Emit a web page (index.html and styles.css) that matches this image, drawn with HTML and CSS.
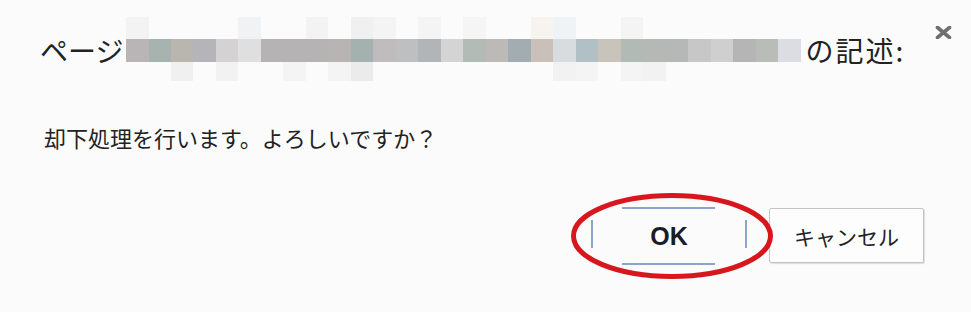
FILE: index.html
```html
<!DOCTYPE html>
<html lang="ja">
<head>
<meta charset="utf-8">
<title>ダイアログ</title>
<link rel="stylesheet" href="styles.css">
</head>
<body>
<div class="dialog">
  <div class="title-row">
    <div class="title">
      <span class="title-text">ページ</span>
      <div class="mosaic" aria-hidden="true">
        <div class="band band-up"></div>
        <div class="band band-main"></div>
        <div class="band band-down"></div>
      </div>
      <span class="title-text title-tail">の記述:</span>
    </div>
    <button class="close" aria-label="閉じる">
      <svg width="17" height="13" viewBox="0 0 17 13"><path d="M2.5 1.5 L14.5 11.5 M14.5 1.5 L2.5 11.5" stroke="#707070" stroke-width="3.6" stroke-linecap="round"/></svg>
    </button>
  </div>
  <p class="message">却下処理を行います。よろしいですか？</p>
  <div class="buttons">
    <button class="btn-ok">OK
      <svg class="mark" width="202" height="86" viewBox="0 0 202 86"><ellipse cx="101" cy="43" rx="98.5" ry="40.5" fill="none" stroke="#d7161e" stroke-width="5"/></svg>
    </button>
    <button class="btn-cancel">キャンセル</button>
  </div>
</div>
</body>
</html>
```
FILE: styles.css
```css
html, body {
  margin: 0;
  padding: 0;
  background: #fbfbfb;
}
body {
  width: 971px;
  height: 312px;
  overflow: hidden;
  font-family: "Noto Sans CJK JP", "Noto Sans", sans-serif;
  color: #222;
}
.dialog {
  box-sizing: border-box;
  height: 312px;
  padding: 17px 19px 0 40px;
}
.title-row {
  display: flex;
  align-items: flex-start;
}
.title {
  display: flex;
  align-items: flex-start;
  font-size: 28px;
  line-height: 28px;
}
.title-text {
  margin-top: 19px;
  white-space: nowrap;
}
.title-tail {
  letter-spacing: 2px;
}
.mosaic {
  width: 675px;
  margin: 0 4px 0 3px;
  display: flex;
  flex-direction: column;
}
.band-up {
  height: 22px;
  background: linear-gradient(to right,
    #f3f3f3 0 22.5px, transparent 22.5px 112.5px, #f0f2f4 112.5px 135px,
    transparent 135px 180px, #f3f3f3 180px 202.5px, transparent 202.5px 225px,
    #f0f0f0 225px 247.5px, #f4f4f4 247.5px 270px, transparent 270px 292.5px,
    #f4f4f4 292.5px 315px, transparent 315px 337.5px, #f5f5f5 337.5px 360px,
    transparent 360px 405px, #f7f4f0 405px 427.5px, #f0f3f5 427.5px 450px,
    transparent 450px 495px, #f4f4f4 495px 517.5px, transparent 517.5px 675px);
}
.band-main {
  height: 23px;
  background: linear-gradient(to right,
    #b9b5b6 0 22.5px, #a6b3ae 22.5px 45px, #b8b6ae 45px 67.5px, #b5b4b9 67.5px 90px,
    #d4d2d2 90px 112.5px, #dfdfdf 112.5px 135px, #b5b3b3 135px 202.5px,
    #b9b4b4 202.5px 225px, #a3b2ae 225px 247.5px, #c0bcbd 247.5px 270px,
    #bdbfc1 270px 292.5px, #b1b5b8 292.5px 315px, #d5d4d4 315px 337.5px,
    #b3bbb7 337.5px 360px, #bcb9b7 360px 382.5px, #a3acb0 382.5px 405px,
    #c8c0b9 405px 427.5px, #d8dcde 427.5px 450px, #b1c0c5 450px 472.5px,
    #c8c3bb 472.5px 495px, #b2bab5 495px 517.5px, #b5b9b6 517.5px 540px,
    #b6b8b8 540px 562.5px, #c7c7c8 562.5px 585px, #d0cfd0 585px 607.5px,
    #b5b5b5 607.5px 630px, #b8bdb8 630px 652.5px, #dcdce3 652.5px 675px);
}
.band-down {
  height: 19px;
  background: linear-gradient(to right,
    transparent 0 45px, #f0f0f0 45px 67.5px, transparent 67.5px 90px,
    #f2f2f2 90px 112.5px, transparent 112.5px 157.5px, #f4f4f4 157.5px 180px,
    transparent 180px 202.5px, #f4f4f4 202.5px 225px, #ebebeb 225px 247.5px,
    transparent 247.5px 427.5px, #f2f2f2 427.5px 450px, #f4f4f4 450px 472.5px,
    transparent 472.5px 495px, #f4f4f4 495px 517.5px, #f2f2f2 517.5px 540px,
    transparent 540px 675px);
}
.close {
  margin: 9px 0 0 auto;
  padding: 0;
  border: 0;
  background: none;
  width: 17px;
  height: 13px;
  display: block;
}
.close svg {
  display: block;
}
.message {
  margin: 45px 0 0 4px;
  font-size: 22px;
  line-height: 22px;
  white-space: nowrap;
}
.buttons {
  display: flex;
  justify-content: flex-end;
  align-items: flex-start;
  margin: 59px 28px 0 0;
}
.btn-ok {
  position: relative;
  width: 158px;
  height: 58px;
  padding: 0;
  border: 0;
  background: transparent;
  font-family: "Liberation Sans", Arial, sans-serif;
  font-weight: bold;
  font-size: 25px;
  color: #1c1c28;
}
.btn-ok::before {
  content: "";
  position: absolute;
  top: 0;
  bottom: 0;
  left: 32px;
  right: 33px;
  border-top: 2px solid #8ba4cc;
  border-bottom: 2px solid #8ba4cc;
}
.btn-ok::after {
  content: "";
  position: absolute;
  top: 13px;
  bottom: 17px;
  left: 1px;
  right: 1px;
  border-left: 2px solid #8ba4cc;
  border-right: 2px solid #8ba4cc;
}
.mark {
  position: absolute;
  left: -19px;
  top: -14px;
  pointer-events: none;
}
.btn-cancel {
  box-sizing: border-box;
  width: 155px;
  height: 55px;
  margin: 1px 0 0 21px;
  padding: 0;
  border: 1px solid #c4c4c4;
  border-radius: 2px;
  background: #fdfdfd;
  box-shadow: 1px 1px 1px rgba(0, 0, 0, 0.12);
  font-family: "Noto Sans CJK JP", sans-serif;
  font-size: 21px;
  color: #222;
}
```
